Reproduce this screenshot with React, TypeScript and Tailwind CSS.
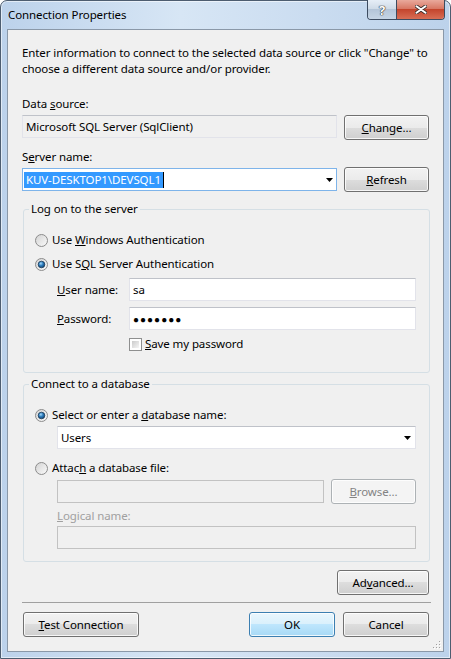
import type { ReactNode } from 'react';

function Radio({ checked = false }: { checked?: boolean }) {
  return (
    <svg width="13" height="13" viewBox="0 0 13 13" className="shrink-0">
      <defs>
        <linearGradient id="radioFill" x1="0" y1="0" x2="1" y2="1">
          <stop offset="0" stopColor="#d2d2d2" />
          <stop offset="1" stopColor="#fbfbfb" />
        </linearGradient>
        <radialGradient id="radioDot" cx="0.4" cy="0.35" r="0.7">
          <stop offset="0" stopColor="#a9dcfa" />
          <stop offset="0.45" stopColor="#2f7fc0" />
          <stop offset="1" stopColor="#103f69" />
        </radialGradient>
      </defs>
      <circle cx="6.5" cy="6.5" r="6" fill="url(#radioFill)" stroke="#8c8c8c" strokeWidth="1" />
      {checked && <circle cx="6.5" cy="6.5" r="3.3" fill="url(#radioDot)" stroke="#1b3a58" strokeWidth="0.8" />}
    </svg>
  );
}

function Checkbox() {
  return (
    <span className="box-border flex h-[13px] w-[13px] shrink-0 border border-[#8e8f8f] bg-white p-[2px]">
      <span className="h-full w-full bg-[linear-gradient(135deg,#cbcbcb,#f6f6f6)]" />
    </span>
  );
}

function Arrow() {
  return (
    <svg width="7" height="4" viewBox="0 0 7 4" className="shrink-0">
      <path d="M0 0h7L3.5 4z" fill="#000" />
    </svg>
  );
}

function Button({
  children,
  className = '',
  isDefault = false,
  disabled = false,
}: {
  children: ReactNode;
  className?: string;
  isDefault?: boolean;
  disabled?: boolean;
}) {
  let look =
    'border-[#707070] bg-[linear-gradient(#f2f2f2_0%,#ebebeb_50%,#dddddd_50%,#cfcfcf_100%)] text-black';
  if (isDefault) {
    look =
      'border-[#3c7fb1] bg-[linear-gradient(#eaf6fd_0%,#d9f0fc_50%,#bee6fd_50%,#a7d9f5_100%)] text-black';
  }
  if (disabled) {
    look = 'border-[#adb2b5] bg-[#f4f4f4] text-[#838383]';
  }
  return (
    <div
      className={`box-border flex h-[25px] shrink-0 items-center justify-center rounded-[3px] border shadow-[inset_0_0_0_1px_rgba(255,255,255,0.8)] ${look} ${className}`}
    >
      {children}
    </div>
  );
}

function TextBox({
  children,
  className = '',
  disabled = false,
}: {
  children?: ReactNode;
  className?: string;
  disabled?: boolean;
}) {
  const look = disabled
    ? 'border-[#c2c2c2] bg-[#f0f0f0]'
    : 'border-[#e2e3ea] border-t-[#bfc2c9] bg-white';
  return (
    <div className={`box-border flex h-[23px] shrink-0 items-center border pl-[2px] ${look} ${className}`}>
      {children}
    </div>
  );
}

export default function App() {
  return (
    <div className="h-[659px] w-[451px] font-['Segoe_UI','Noto_Sans',sans-serif] text-[11.5px] leading-[16px] tracking-[-0.1px] text-black">
      <div className="box-border flex h-full flex-col rounded-t-[7px] border border-[#4d5d70] bg-[linear-gradient(to_right,#bcd2eb,#d7e6f5_40%,#cadcf0_70%,#bcd2eb)] shadow-[inset_0_0_0_1px_rgba(255,255,255,0.55)]">
        {/* title bar */}
        <div className="flex h-[28px] shrink-0 items-start">
          <div className="pl-[7px] pt-[6px]">Connection Properties</div>
          <div className="flex-1" />
          <div className="-mt-[1px] mr-[5px] flex h-[20px] overflow-hidden rounded-b-[4px] border border-t-0 border-[#3d4c60]">
            <div className="flex w-[29px] items-center justify-center border-r border-[#3d4c60] bg-[linear-gradient(#e6eef7,#cdd9e6_50%,#b4c5d8_50%,#c6d5e5)] font-bold text-[13px] text-white [text-shadow:0_0_1px_#2b2b2b,0_0_1px_#2b2b2b,0_0_1px_#2b2b2b]">
              ?
            </div>
            <div className="flex w-[47px] items-center justify-center bg-[linear-gradient(#e9a99c,#d6735f_50%,#c4452d_50%,#d86e55)]">
              <svg width="12" height="9" viewBox="0 0 12 9">
                <path d="M1.5 1.2 L10.5 7.8 M10.5 1.2 L1.5 7.8" stroke="#3a2c2a" strokeWidth="3.6" strokeLinecap="round" />
                <path d="M1.5 1.2 L10.5 7.8 M10.5 1.2 L1.5 7.8" stroke="#fff" strokeWidth="2" strokeLinecap="round" />
              </svg>
            </div>
          </div>
        </div>

        {/* client area */}
        <div className="relative mx-[6px] mb-[6px] flex flex-1 flex-col border border-[#8a98a8] bg-[#f0f0f0] px-[14px] pt-[15px]">
          <p className="whitespace-nowrap">
            Enter information to connect to the selected data source or click "Change" to
            <br />
            choose a different data source and/or provider.
          </p>

          <div className="mt-[19px]">
            Data <u>s</u>ource:
          </div>
          <div className="mt-[3px] flex items-start gap-[7px]">
            <TextBox className="w-[315px] border-[#dadce2] !bg-[#f0f0f0] pl-[3px]">
              Microsoft SQL Server (SqlClient)
            </TextBox>
            <Button className="w-[85px]">
              <span>
                <u>C</u>hange...
              </span>
            </Button>
          </div>

          <div className="mt-[9px]">
            S<u>e</u>rver name:
          </div>
          <div className="mt-[2px] flex items-center gap-[7px]">
            <div className="box-border flex h-[23px] w-[315px] items-center border border-[#7eb4ea] bg-white pl-[1px] pr-[3px]">
              <span className="bg-[#3399ff] px-[2px] text-white">KUV-DESKTOP1\DEVSQL1</span>
              <span className="h-[16px] w-[1px] bg-black" />
              <div className="flex-1" />
              <Arrow />
            </div>
            <Button className="w-[85px]">
              <span>
                <u>R</u>efresh
              </span>
            </Button>
          </div>

          <fieldset className="ml-[1px] mt-[9px] w-[407px] rounded-[3px] border border-[#d5dfe5] pb-[20px] pr-[13px]">
            <legend className="ml-[5px] px-[2px]">Log on to the server</legend>
            <label className="ml-[11px] mt-[15px] flex items-center gap-[4px]">
              <Radio />
              <span>
                Use <u>W</u>indows Authentication
              </span>
            </label>
            <label className="ml-[11px] mt-[8px] flex items-center gap-[4px]">
              <Radio checked />
              <span>
                Use S<u>Q</u>L Server Authentication
              </span>
            </label>
            <div className="ml-[33px] mt-[6px] flex items-center">
              <span className="w-[72px]">
                <u>U</u>ser name:
              </span>
              <TextBox className="flex-1 pl-[3px]">sa</TextBox>
            </div>
            <div className="ml-[33px] mt-[6px] flex items-center">
              <span className="w-[72px]">
                <u>P</u>assword:
              </span>
              <TextBox className="flex-1 pl-[3px]">
                <span className="text-[10px] tracking-[1px]">●●●●●●●</span>
              </TextBox>
            </div>
            <label className="ml-[105px] mt-[6px] flex items-center gap-[3px]">
              <Checkbox />
              <span>
                <u>S</u>ave my password
              </span>
            </label>
          </fieldset>

          <fieldset className="ml-[1px] mt-[3px] w-[407px] rounded-[3px] border border-[#d5dfe5] pb-[12px] pr-[13px]">
            <legend className="ml-[5px] px-[2px]">Connect to a database</legend>
            <label className="ml-[11px] mt-[15px] flex items-center gap-[4px]">
              <Radio checked />
              <span>
                Select or enter a <u>d</u>atabase name:
              </span>
            </label>
            <div className="ml-[33px] mt-[3px] box-border flex h-[23px] items-center border border-[#e2e3ea] border-t-[#bfc2c9] bg-white pl-[3px] pr-[4px]">
              <span>Users</span>
              <div className="flex-1" />
              <Arrow />
            </div>
            <label className="ml-[11px] mt-[11px] flex items-center gap-[4px]">
              <Radio />
              <span>
                Attac<u>h</u> a database file:
              </span>
            </label>
            <div className="ml-[33px] mt-[3px] flex items-center gap-[7px]">
              <TextBox disabled className="flex-1" />
              <Button disabled className="w-[85px]">
                <span>
                  <u>B</u>rowse...
                </span>
              </Button>
            </div>
            <div className="ml-[33px] mt-[4px] text-[#a0a0a0]">
              <u>L</u>ogical name:
            </div>
            <TextBox disabled className="ml-[33px] mt-[2px]" />
          </fieldset>

          <div className="mt-[8px] flex justify-end">
            <Button className="w-[92px]">
              <span>
                Ad<u>v</u>anced...
              </span>
            </Button>
          </div>

          <div className="-mr-[2px] mt-[7px] h-[1px] bg-[#a0a0a0]" />

          <div className="mt-[9px] flex items-center">
            <Button className="ml-[1px] w-[116px]">
              <span>
                <u>T</u>est Connection
              </span>
            </Button>
            <div className="flex-1" />
            <Button isDefault className="w-[86px]">
              OK
            </Button>
            <Button className="ml-[8px] w-[86px]">Cancel</Button>
          </div>

          {/* size grip */}
          <svg width="10" height="10" viewBox="0 0 10 10" className="absolute bottom-[1px] right-[1px]">
            {[
              [8, 2],
              [8, 5],
              [5, 5],
              [8, 8],
              [5, 8],
              [2, 8],
            ].map(([x, y]) => (
              <g key={`${x}-${y}`}>
                <rect x={x} y={y} width="1" height="1" fill="#ffffff" />
                <rect x={x - 1} y={y - 1} width="1" height="1" fill="#a0a0a0" />
              </g>
            ))}
          </svg>
        </div>
      </div>
    </div>
  );
}
